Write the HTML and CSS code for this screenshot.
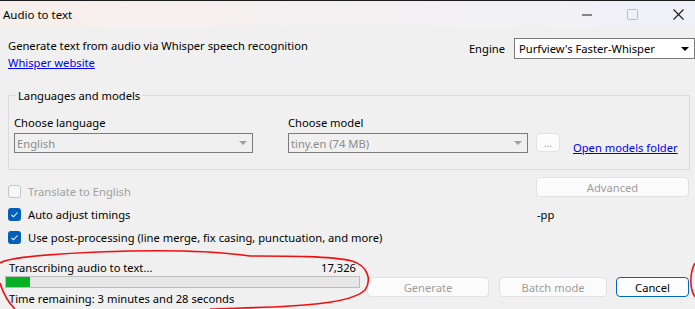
FILE: index.html
```html
<!DOCTYPE html>
<html lang="en">
<head>
  <meta charset="UTF-8" />
  <title>Audio to text</title>
  <link rel="stylesheet" href="styles.css">
</head>
<body>
  <div class="window">
    <div class="titlebar">
      <span class="title">Audio to text</span>
      <div class="caption">
        <svg width="10" height="11" viewBox="0 0 10 11"><path d="M0 6h10" stroke="#1a1a1a" stroke-width="1"/></svg>
        <svg width="11" height="11" viewBox="0 0 11 11"><rect x="0.5" y="0.5" width="10" height="10" rx="1" fill="none" stroke="#bcbcbc"/></svg>
        <svg width="11" height="11" viewBox="0 0 11 11"><path d="M0.5 0.5l10 10M10.5 0.5l-10 10" stroke="#1a1a1a" stroke-width="1.1"/></svg>
      </div>
    </div>

    <div class="content">
      <div class="head">
        <div class="intro">
          <div>Generate text from audio via Whisper speech recognition</div>
          <a class="link" href="#">Whisper website</a>
        </div>
        <div class="engine">
          <span>Engine</span>
          <div class="select engine-select">
            <span>Purfview's Faster-Whisper</span>
            <span class="arrow"></span>
          </div>
        </div>
      </div>

      <fieldset class="group">
        <legend>Languages and models</legend>
        <div class="group-row">
          <div class="field lang">
            <label>Choose language</label>
            <div class="select disabled">
              <span>English</span>
              <span class="arrow"></span>
            </div>
          </div>
          <div class="field model">
            <label>Choose model</label>
            <div class="select disabled">
              <span>tiny.en (74 MB)</span>
              <span class="arrow"></span>
            </div>
          </div>
          <button class="btn dots" disabled>...</button>
          <a class="link folder" href="#">Open models folder</a>
        </div>
      </fieldset>

      <div class="options">
        <div class="opt-row">
          <div class="check disabled"><span class="box"></span>Translate to English</div>
          <div class="opt-side"><button class="btn advanced" disabled>Advanced</button></div>
        </div>
        <div class="opt-row">
          <div class="check"><span class="box on"></span>Auto adjust timings</div>
          <div class="opt-side"><span class="pp">-pp</span></div>
        </div>
        <div class="opt-row">
          <div class="check"><span class="box on"></span>Use post-processing (line merge, fix casing, punctuation, and more)</div>
        </div>
      </div>

      <div class="bottom">
        <div class="progress-block">
          <div class="progress-top">
            <span>Transcribing audio to text...</span>
            <span>17,326</span>
          </div>
          <div class="bar"><div class="fill" style="width: 24px"></div></div>
          <div class="remaining">Time remaining: 3 minutes and 28 seconds</div>
        </div>
        <button class="btn generate" disabled>Generate</button>
        <button class="btn batch" disabled>Batch mode</button>
        <button class="btn cancel">Cancel</button>
      </div>
    </div>

    <svg class="marks" width="695" height="309" viewBox="0 0 695 309">
      <path d="M0 263 C10 256 60 253 130 251 C180 250 215 251 250 256 C290 256 330 256 352 261 C368 266 372 280 365 290 C356 299 330 304 290 306 C260 308 235 308 210 309" fill="none" stroke="#f01010" stroke-width="1.6"/>
      <path d="M0 283 C3 293 8 302 15 309" fill="none" stroke="#f01010" stroke-width="1.6"/>
      <path d="M695 263 C690 272 689 288 695 297" fill="none" stroke="#f01010" stroke-width="1.6"/>
    </svg>
  </div>
</body>
</html>
```

FILE: styles.css
```css
* {
  box-sizing: border-box;
}

body {
  margin: 0;
  font-family: "Noto Sans", "Open Sans", sans-serif;
  font-size: 11.2px;
  color: #000;
  background: #f0f0f0;
}

.window {
  position: relative;
  width: 695px;
  height: 309px;
  overflow: hidden;
  background: #f0f0f0;
}

.titlebar {
  height: 28px;
  border-top: 1px solid #1c1c1c;
  background: linear-gradient(90deg, #f8efeb, #eff1f8);
  display: flex;
  align-items: center;
  justify-content: space-between;
}

.title {
  padding-left: 3px;
  line-height: 17px;
  font-size: 11.5px;
}

.caption {
  display: flex;
  align-items: center;
  gap: 35px;
  padding-right: 11px;
}

.content {
  padding: 0 6px 0 8px;
}

.head {
  display: flex;
  justify-content: space-between;
  align-items: flex-start;
  margin-top: 9px;
  line-height: 17px;
}

.link {
  color: #0000ee;
  text-decoration: underline;
  white-space: nowrap;
}

.engine {
  display: flex;
  align-items: center;
  gap: 9px;
  margin-top: 1px;
  margin-right: -6px;
}

.select {
  height: 21px;
  border: 1px solid #7a7a7a;
  background: #fff;
  display: flex;
  align-items: center;
  justify-content: space-between;
  padding: 0 5px 0 4px;
}

.engine-select {
  width: 181px;
}

.arrow {
  width: 0;
  height: 0;
  border-left: 4px solid transparent;
  border-right: 4px solid transparent;
  border-top: 4px solid #000;
}

.select.disabled {
  height: 20px;
  background: #f0f0f0;
  color: #8c8c8c;
  border-color: #7a7a7a;
  padding-left: 2px;
}

.select.disabled .arrow {
  border-top-color: #a0a0a0;
}

.group {
  margin: 16px 0 0 0;
  padding: 0 5px 16px 5px;
  border: 1px solid #dcdcdc;
  width: 682px;
}

.group legend {
  padding: 0 2px;
  margin-left: 2px;
  line-height: 17px;
}

.group-row {
  display: flex;
  align-items: flex-end;
  margin-top: 10px;
}

.field label {
  display: block;
  line-height: 17px;
  margin-bottom: 2px;
}

.lang {
  width: 239px;
}

.model {
  width: 240px;
  margin-left: 35px;
}

.btn {
  font-family: inherit;
  font-size: 11.2px;
  height: 20px;
  border: 1px solid #e2e2e2;
  border-radius: 4px;
  background: #fbfbfb;
  color: #000;
  padding: 0;
}

.btn:disabled {
  color: #9d9d9d;
}

.dots {
  width: 24px;
  height: 19px;
  margin-left: 8px;
  margin-bottom: 1px;
  font-size: 10px;
}

.folder {
  margin-left: 13px;
  line-height: 17px;
  margin-bottom: -3px;
}

.options {
  margin-top: 10px;
}

.opt-row {
  display: flex;
  height: 23px;
  align-items: center;
}

.check {
  flex: 1;
  display: flex;
  align-items: center;
  gap: 7px;
  line-height: 17px;
}

.check.disabled {
  color: #a0a0a0;
}

.box {
  width: 13px;
  height: 13px;
  border-radius: 3px;
  border: 1px solid #c4c4c4;
  background: #f7f7f7;
}

.box.on {
  border: none;
  background: #005fb8 url("data:image/svg+xml;utf8,<svg xmlns='http://www.w3.org/2000/svg' width='13' height='13' viewBox='0 0 13 13'><path d='M3.5 6.8l2 2 4-4.3' fill='none' stroke='white' stroke-width='1.1'/></svg>") no-repeat center;
}

.opt-side {
  width: 153px;
  align-self: flex-start;
  display: flex;
  line-height: 23px;
}

.advanced {
  width: 153px;
  margin-top: -3px;
}

.pp {
  padding-left: 1px;
}

.bottom {
  display: flex;
  align-items: flex-start;
  margin-top: 10px;
  margin-left: -3px;
}

.progress-block {
  width: 355px;
}

.progress-top {
  display: flex;
  justify-content: space-between;
  line-height: 17px;
  padding: 0 4px;
}

.bar {
  height: 12px;
  border: 1px solid #bcbcbc;
  background: #e6e6e6;
}

.fill {
  height: 100%;
  background: #06b025;
}

.remaining {
  line-height: 17px;
  margin-top: 2px;
  padding-left: 4px;
}

.generate {
  width: 122px;
  margin: 18px 0 0 7px;
}

.batch {
  width: 108px;
  margin: 18px 0 0 10px;
}

.cancel {
  width: 73px;
  margin: 18px 0 0 9px;
  border-color: #0067c0;
  background: #fdfdfd;
}

.marks {
  position: absolute;
  left: 0;
  top: 0;
  pointer-events: none;
}
```
